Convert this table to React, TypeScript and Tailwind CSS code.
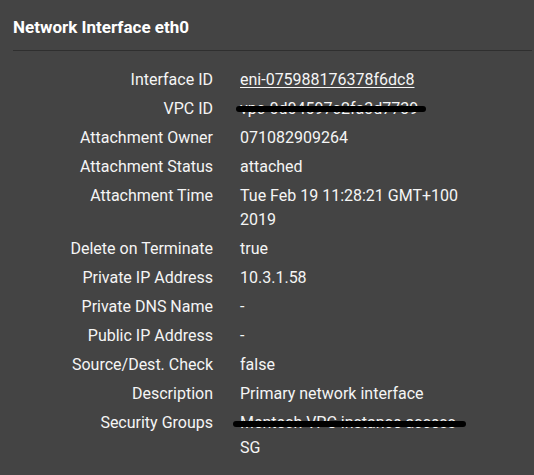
import React from 'react';

type Row = {
  label: string;
  value: string;
  link?: boolean;
  redact?: string;
};

const rows: Row[] = [
  { label: 'Interface ID', value: 'eni-075988176378f6dc8', link: true },
  { label: 'VPC ID', value: 'vpc-0d04597c2fa3d7739', redact: 'left-[-4px] right-[-8px] top-[9px]' },
  { label: 'Attachment Owner', value: '071082909264' },
  { label: 'Attachment Status', value: 'attached' },
  { label: 'Attachment Time', value: 'Tue Feb 19 11:28:21 GMT+100 2019' },
  { label: 'Delete on Terminate', value: 'true' },
  { label: 'Private IP Address', value: '10.3.1.58' },
  { label: 'Private DNS Name', value: '-' },
  { label: 'Public IP Address', value: '-' },
  { label: 'Source/Dest. Check', value: 'false' },
  { label: 'Description', value: 'Primary network interface' },
  { label: 'Security Groups', value: 'Mentech VPC instance access', redact: 'left-[-7px] right-[-10px] top-[10px]' },
];

function Redacted({ text, pos }: { text: string; pos: string }) {
  // black marker stroke drawn over the value
  return (
    <span className="relative inline-block">
      {text}
      <span className={`absolute h-[6px] rounded-full bg-black ${pos}`} />
    </span>
  );
}

export default function App() {
  return (
    <div
      className="w-[534px] h-[475px] overflow-hidden bg-[#444444] text-[#f5f5f5] pl-[13px] pr-[2px]"
      style={{ fontFamily: 'Roboto, "Liberation Sans", sans-serif' }}
    >
      <div className="pt-[15px] pb-[11px] border-b border-[#2f2f2f]">
        <h1 className="text-[17px] leading-6 font-bold text-white">Network Interface eth0</h1>
      </div>

      <div className="grid grid-cols-[200px_232px] gap-x-[27px] gap-y-[5px] pt-[17px] text-[16px] leading-6">
        {rows.map((r) => (
          <React.Fragment key={r.label}>
            <div className="text-right">{r.label}</div>
            <div>
              {r.link ? (
                <a href="#" className="underline underline-offset-2">{r.value}</a>
              ) : r.redact ? (
                <>
                  <Redacted text={r.value} pos={r.redact} />
                  {r.label === 'Security Groups' && <div className="pt-px">SG</div>}
                </>
              ) : (
                r.value
              )}
            </div>
          </React.Fragment>
        ))}
      </div>
    </div>
  );
}
